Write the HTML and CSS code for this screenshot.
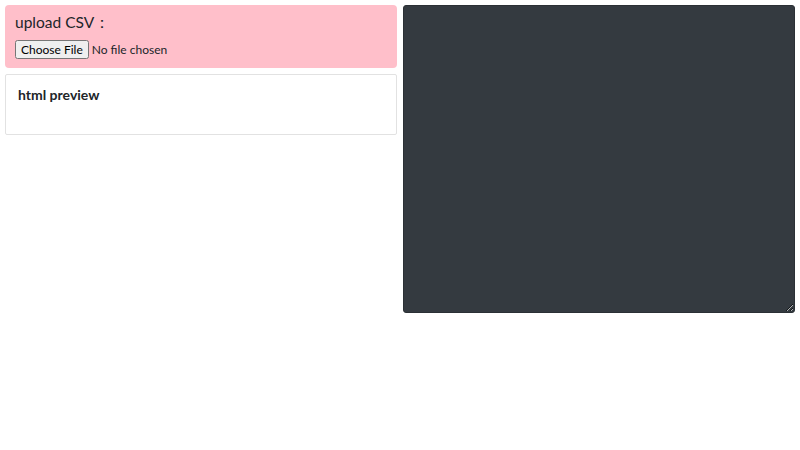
FILE: index.html
```html
<!DOCTYPE html>
<html>
<head>
<meta charset="utf-8">
<link rel="stylesheet" href="styles.css">
</head>
<body>
<div class="layout">
  <div class="left">
    <div class="upload">
      <div class="label">upload CSV：</div>
      <input type="file" class="file">
    </div>
    <div class="preview">
      <h3 class="title">html preview</h3>
    </div>
  </div>
  <textarea class="editor"></textarea>
</div>
</body>
</html>
```
FILE: styles.css
```css
html, body {
  margin: 0;
  padding: 0;
  background: #fff;
}
body {
  font-family: Lato, "Noto Sans", sans-serif;
  color: #212529;
  padding: 5px;
}
.layout {
  display: grid;
  grid-template-columns: 392px 392px;
  column-gap: 6px;
  align-items: start;
}
.left {
  display: flex;
  flex-direction: column;
  gap: 6px;
}
.upload {
  box-sizing: border-box;
  background: #ffbfca;
  border-radius: 4px;
  padding: 7px 9px 0 10px;
  height: 63px;
}
.label {
  font-size: 15.5px;
  line-height: 20px;
  margin-bottom: 8px;
}
.file {
  display: block;
  height: 19px;
  font-family: Lato, "Noto Sans", sans-serif;
  font-size: 12px;
  color: #212529;
}
.file::file-selector-button {
  font: inherit;
  height: 19px;
  padding: 0 4px;
  margin-right: 3px;
}
.preview {
  box-sizing: border-box;
  border: 1px solid #e2e2e2;
  border-radius: 2px;
  height: 61px;
  padding: 0 12px;
}
.title {
  margin: 10px 0 0 0;
  font-size: 14px;
  font-weight: 700;
  line-height: 20px;
}
.editor {
  box-sizing: border-box;
  width: 392px;
  height: 308px;
  margin: 0;
  background: #343a40;
  border: 1px solid #2b3035;
  border-radius: 3px;
  display: block;
}
```
